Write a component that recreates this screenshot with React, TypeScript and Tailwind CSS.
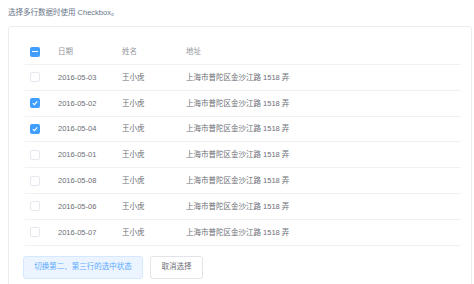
import React, { useState } from 'react';

const rows = [
  { date: '2016-05-03', name: '王小虎', address: '上海市普陀区金沙江路 1518 弄' },
  { date: '2016-05-02', name: '王小虎', address: '上海市普陀区金沙江路 1518 弄' },
  { date: '2016-05-04', name: '王小虎', address: '上海市普陀区金沙江路 1518 弄' },
  { date: '2016-05-01', name: '王小虎', address: '上海市普陀区金沙江路 1518 弄' },
  { date: '2016-05-08', name: '王小虎', address: '上海市普陀区金沙江路 1518 弄' },
  { date: '2016-05-06', name: '王小虎', address: '上海市普陀区金沙江路 1518 弄' },
  { date: '2016-05-07', name: '王小虎', address: '上海市普陀区金沙江路 1518 弄' },
];

const Box: React.FC<{ state: 'on' | 'off' | 'mixed' }> = ({ state }) => {
  if (state === 'off') {
    return <span className="block w-[10px] h-[10px] rounded-[2px] border border-[#e4e7ed] bg-white" />;
  }
  return (
    <span className="flex items-center justify-center w-[10px] h-[10px] rounded-[2px] bg-[#409eff]">
      {state === 'mixed' ? (
        <span className="block w-[6px] h-[1px] bg-white" />
      ) : (
        <svg width="8" height="8" viewBox="0 0 8 8">
          <path d="M1.8 4.1 L3.4 5.6 L6.3 2.4" fill="none" stroke="white" strokeWidth="1.1" />
        </svg>
      )}
    </span>
  );
};

export default function App() {
  const [checked, setChecked] = useState<boolean[]>([false, true, true, false, false, false, false]);
  const toggle = () => setChecked(c => c.map((v, i) => (i === 1 || i === 2 ? !v : v)));

  return (
    <div className="w-[474px] h-[284px] overflow-hidden bg-white px-2 pt-[7px] text-[7.5px] text-[#6b6e75] font-['Liberation_Sans','Noto_Sans_CJK_SC',sans-serif]">
      <p className="text-[#6a7688] leading-[12px] h-[19px]">选择多行数据时使用 Checkbox。</p>
      <div className="w-[464px] border border-[#ededed] rounded-[3px] pl-4 pr-3 pt-3 pb-6">
        <div className="w-[436px]">
          <div className="flex items-center h-[26px] border-b border-[#eff1f5] text-[#93959b]">
            <div className="w-[33px] flex justify-start pl-[5px]"><Box state="mixed" /></div>
            <div className="w-[64px]">日期</div>
            <div className="w-[64px]">姓名</div>
            <div className="flex-1">地址</div>
          </div>
          {rows.map((r, i) => (
            <div key={i} className="flex items-center h-[25.8px] border-b border-[#eff1f5]">
              <div className="w-[33px] flex justify-start pl-[5px]"><Box state={checked[i] ? 'on' : 'off'} /></div>
              <div className="w-[64px]">{r.date}</div>
              <div className="w-[64px]">{r.name}</div>
              <div className="flex-1">{r.address}</div>
            </div>
          ))}
          <div className="flex gap-[7px] mt-[10px] -ml-[2px]">
            <button onClick={toggle} className="w-[120px] h-[23px] whitespace-nowrap rounded-[3px] border border-[#d4e8ff] bg-[#ecf5ff] text-[#5aa9ff] text-[7.5px]">
              切换第二、第三行的选中状态
            </button>
            <button onClick={() => setChecked(c => c.map(() => false))} className="w-[53px] h-[23px] whitespace-nowrap rounded-[3px] border border-[#e2e4ea] bg-white text-[#6b6e75] text-[7.5px]">
              取消选择
            </button>
          </div>
        </div>
      </div>
    </div>
  );
}
